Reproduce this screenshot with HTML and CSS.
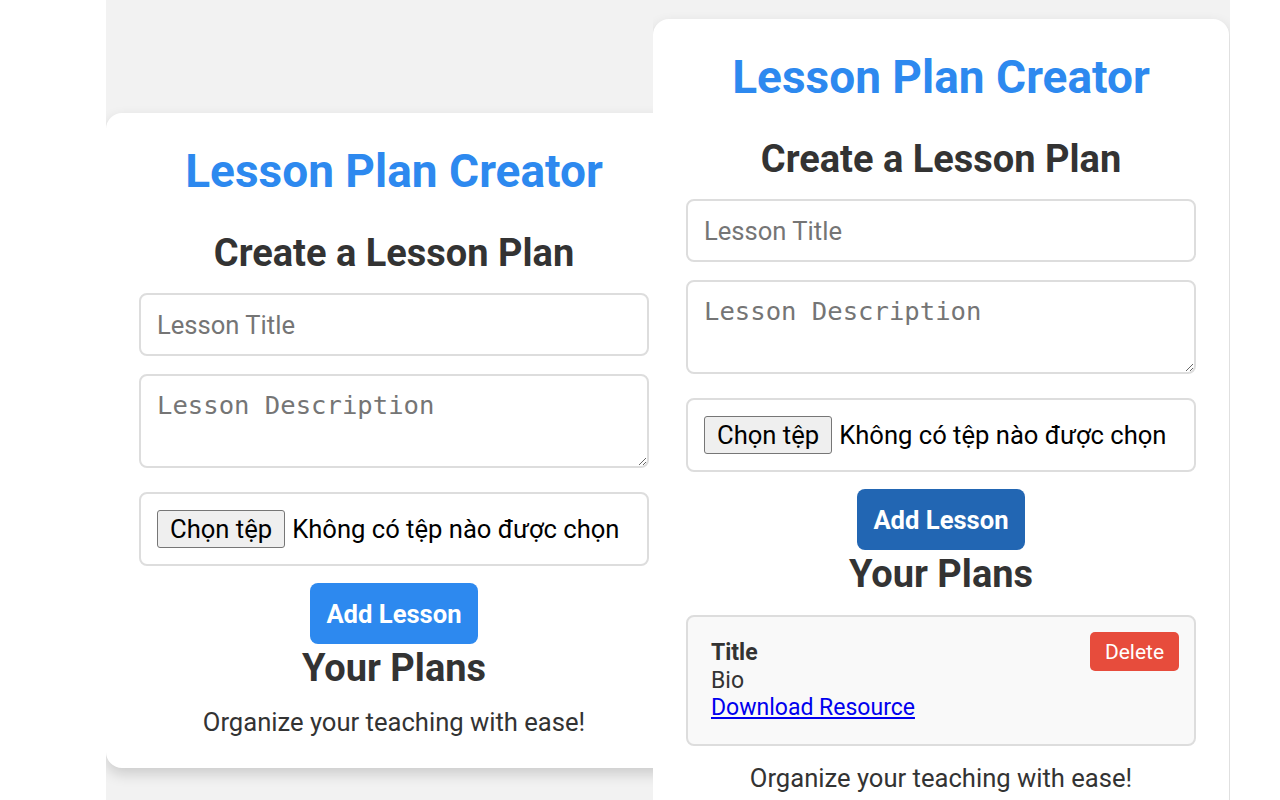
FILE: index.html
```html
<!DOCTYPE html>
<html>
<head>
    <meta charset="utf-8">
    <title>Lesson Plan Creator</title>
    <link rel="stylesheet" href="styles.css">
</head>
<body>
    <div class="shots">
        <!-- Empty state -->
        <section class="shot shot-left">
            <div class="card">
                <h1>Lesson Plan Creator</h1>
                <h2>Create a Lesson Plan</h2>
                <form class="lesson-form">
                    <input type="text" placeholder="Lesson Title">
                    <textarea placeholder="Lesson Description"></textarea>
                    <div class="file-field">
                        <span class="file-btn">Chọn tệp</span>
                        <span class="file-name">Không có tệp nào được chọn</span>
                    </div>
                    <button type="button" class="add-btn">Add Lesson</button>
                </form>
                <h2 class="plans-title">Your Plans</h2>
                <p class="tagline">Organize your teaching with ease!</p>
            </div>
        </section>

        <!-- After adding one plan -->
        <section class="shot shot-right">
            <div class="card">
                <h1>Lesson Plan Creator</h1>
                <h2>Create a Lesson Plan</h2>
                <form class="lesson-form">
                    <input type="text" placeholder="Lesson Title">
                    <textarea placeholder="Lesson Description"></textarea>
                    <div class="file-field">
                        <span class="file-btn">Chọn tệp</span>
                        <span class="file-name">Không có tệp nào được chọn</span>
                    </div>
                    <button type="button" class="add-btn hover">Add Lesson</button>
                </form>
                <h2 class="plans-title">Your Plans</h2>
                <ul class="plans">
                    <li class="plan">
                        <div class="plan-info">
                            <strong>Title</strong>
                            <span>Bio</span>
                            <a href="#">Download Resource</a>
                        </div>
                        <button type="button" class="delete-btn">Delete</button>
                    </li>
                </ul>
                <p class="tagline">Organize your teaching with ease!</p>
            </div>
        </section>
    </div>
</body>
</html>
```

FILE: styles.css
```css
* {
    margin: 0;
    padding: 0;
    box-sizing: border-box;
}

body {
    font-family: Roboto, "Liberation Sans", sans-serif;
    background: #fff;
    width: 1280px;
    height: 800px;
    overflow: hidden;
}

.shots {
    display: flex;
    padding-left: 106px;
    height: 800px;
}

.shot {
    flex: none;
    height: 800px;
    overflow: hidden;
    background: #f2f2f2;
}

.shot-left {
    width: 547px;
    padding-top: 113px;
}

.shot-right {
    width: 577px;
    padding-top: 19px;
}

.card {
    width: 576px;
    background: #fff;
    border-radius: 16px;
    box-shadow: 0 6px 14px rgba(0,0,0,0.16);
    padding: 31px 33px;
    text-align: center;
}

h1 {
    font-size: 46px;
    line-height: 54px;
    font-weight: 700;
    color: #2d89ef;
    margin-bottom: 33px;
}

h2 {
    font-size: 38px;
    line-height: 44px;
    font-weight: 700;
    color: #333;
    margin-bottom: 18px;
}

.lesson-form {
    display: flex;
    flex-direction: column;
    align-items: center;
}

.lesson-form input,
.lesson-form textarea,
.file-field {
    width: 100%;
    border: 2px solid #ddd;
    border-radius: 8px;
    background: #fff;
}

.lesson-form input {
    height: 63px;
    padding: 0 16px;
    font-family: Roboto, sans-serif;
    font-size: 25.6px;
    margin-bottom: 18px;
}

.lesson-form textarea {
    height: 94px;
    padding: 14px 16px;
    font-family: "DejaVu Sans Mono", monospace;
    font-size: 25.6px;
    margin-bottom: 24px;
}

.lesson-form input::placeholder,
.lesson-form textarea::placeholder {
    color: #757575;
}

.file-field {
    height: 74px;
    padding: 0 16px;
    display: flex;
    align-items: center;
    gap: 7px;
    font-size: 25.6px;
    color: #000;
    margin-bottom: 17px;
    white-space: nowrap;
}

.file-btn {
    display: flex;
    align-items: center;
    height: 38px;
    padding: 0 12px;
    background: #efefef;
    border: 1px solid #767676;
    border-radius: 3px;
}

.add-btn {
    height: 61px;
    padding: 0 16px;
    border: none;
    border-radius: 8px;
    background: #2d89ef;
    color: #fff;
    font-family: Roboto, sans-serif;
    font-size: 25.6px;
    font-weight: 700;
    margin-bottom: 2px;
}

.add-btn.hover {
    background: #2266b3;
}

.plans-title {
    margin-bottom: 0;
}

.plans {
    list-style: none;
    margin-top: 19px;
    text-align: left;
}

.plan {
    height: 131px;
    display: flex;
    justify-content: space-between;
    align-items: flex-start;
    padding: 15px 15px 0 23px;
    background: #f9f9f9;
    border: 2px solid #ddd;
    border-radius: 8px;
}

.plan-info {
    display: flex;
    flex-direction: column;
    align-items: flex-start;
    padding-top: 7px;
    font-size: 23px;
    line-height: 27.5px;
    color: #333;
}

.plan-info a {
    color: #0000ee;
}

.delete-btn {
    width: 89px;
    height: 39px;
    border: none;
    border-radius: 5px;
    background: #e74c3c;
    color: #fff;
    font-family: Roboto, sans-serif;
    font-size: 21px;
}

.tagline {
    font-size: 25.6px;
    line-height: 30px;
    color: #333;
    margin-top: 17px;
}
```
